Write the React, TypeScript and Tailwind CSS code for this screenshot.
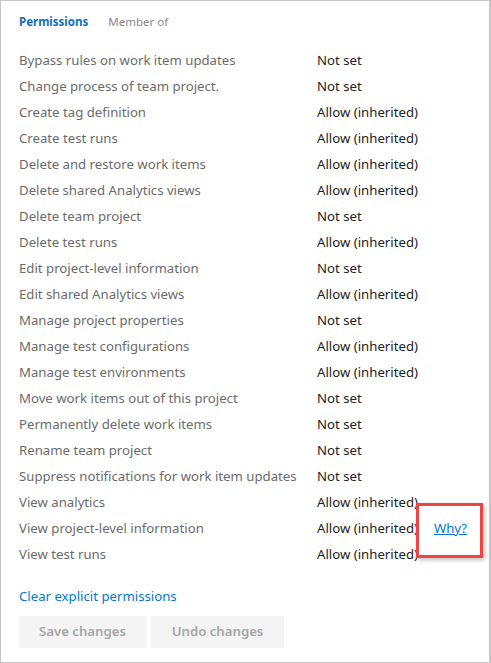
const rows: [string, string][] = [
  ["Bypass rules on work item updates", "Not set"],
  ["Change process of team project.", "Not set"],
  ["Create tag definition", "Allow (inherited)"],
  ["Create test runs", "Allow (inherited)"],
  ["Delete and restore work items", "Allow (inherited)"],
  ["Delete shared Analytics views", "Allow (inherited)"],
  ["Delete team project", "Not set"],
  ["Delete test runs", "Allow (inherited)"],
  ["Edit project-level information", "Not set"],
  ["Edit shared Analytics views", "Allow (inherited)"],
  ["Manage project properties", "Not set"],
  ["Manage test configurations", "Allow (inherited)"],
  ["Manage test environments", "Allow (inherited)"],
  ["Move work items out of this project", "Not set"],
  ["Permanently delete work items", "Not set"],
  ["Rename team project", "Not set"],
  ["Suppress notifications for work item updates", "Not set"],
  ["View analytics", "Allow (inherited)"],
  ["View project-level information", "Allow (inherited)"],
  ["View test runs", "Allow (inherited)"],
];

export default function App() {
  return (
    <div
      className="w-[491px] h-[663px] bg-white border border-[#c6c6c6] border-r-2 overflow-hidden"
      style={{ fontFamily: '"Noto Sans", "Open Sans", sans-serif' }}
    >
      <div className="flex items-center gap-5 pl-[18px] pt-[11px] h-[30px] text-[11.5px]">
        <span className="font-bold text-[#106ebe]">Permissions</span>
        <span className="text-[#8a8886]">Member of</span>
      </div>

      <div className="mt-[17px] pl-[18px]">
        {rows.map(([label, value]) => (
          <div key={label} className="flex items-center h-[26px] text-[13.2px]">
            <span className="w-[298px] text-[#6b6b6b] whitespace-nowrap">{label}</span>
            <span className="text-[#222]">{value}</span>
            {label === "View project-level information" && (
              <span className="relative ml-[16px]">
                <a href="#" className="text-[#0078d4] underline">Why?</a>
                <span className="absolute left-[-18px] top-[-16px] w-[67px] h-[55px] border-[3px] border-[#ef4444] shadow-[2px_2px_4px_rgba(0,0,0,0.25)]" />
              </span>
            )}
          </div>
        ))}
      </div>

      <div className="pl-[18px] mt-[15px]">
        <a href="#" className="text-[13.2px] text-[#0078d4]">Clear explicit permissions</a>
        <div className="flex gap-[5px] mt-[9px]">
          <button className="w-[127px] h-[32px] bg-[#f4f4f4] text-[#a6a6a6] text-[13.2px] font-semibold">
            Save changes
          </button>
          <button className="w-[133px] h-[32px] bg-[#f4f4f4] text-[#a6a6a6] text-[13.2px] font-semibold">
            Undo changes
          </button>
        </div>
      </div>
    </div>
  );
}
